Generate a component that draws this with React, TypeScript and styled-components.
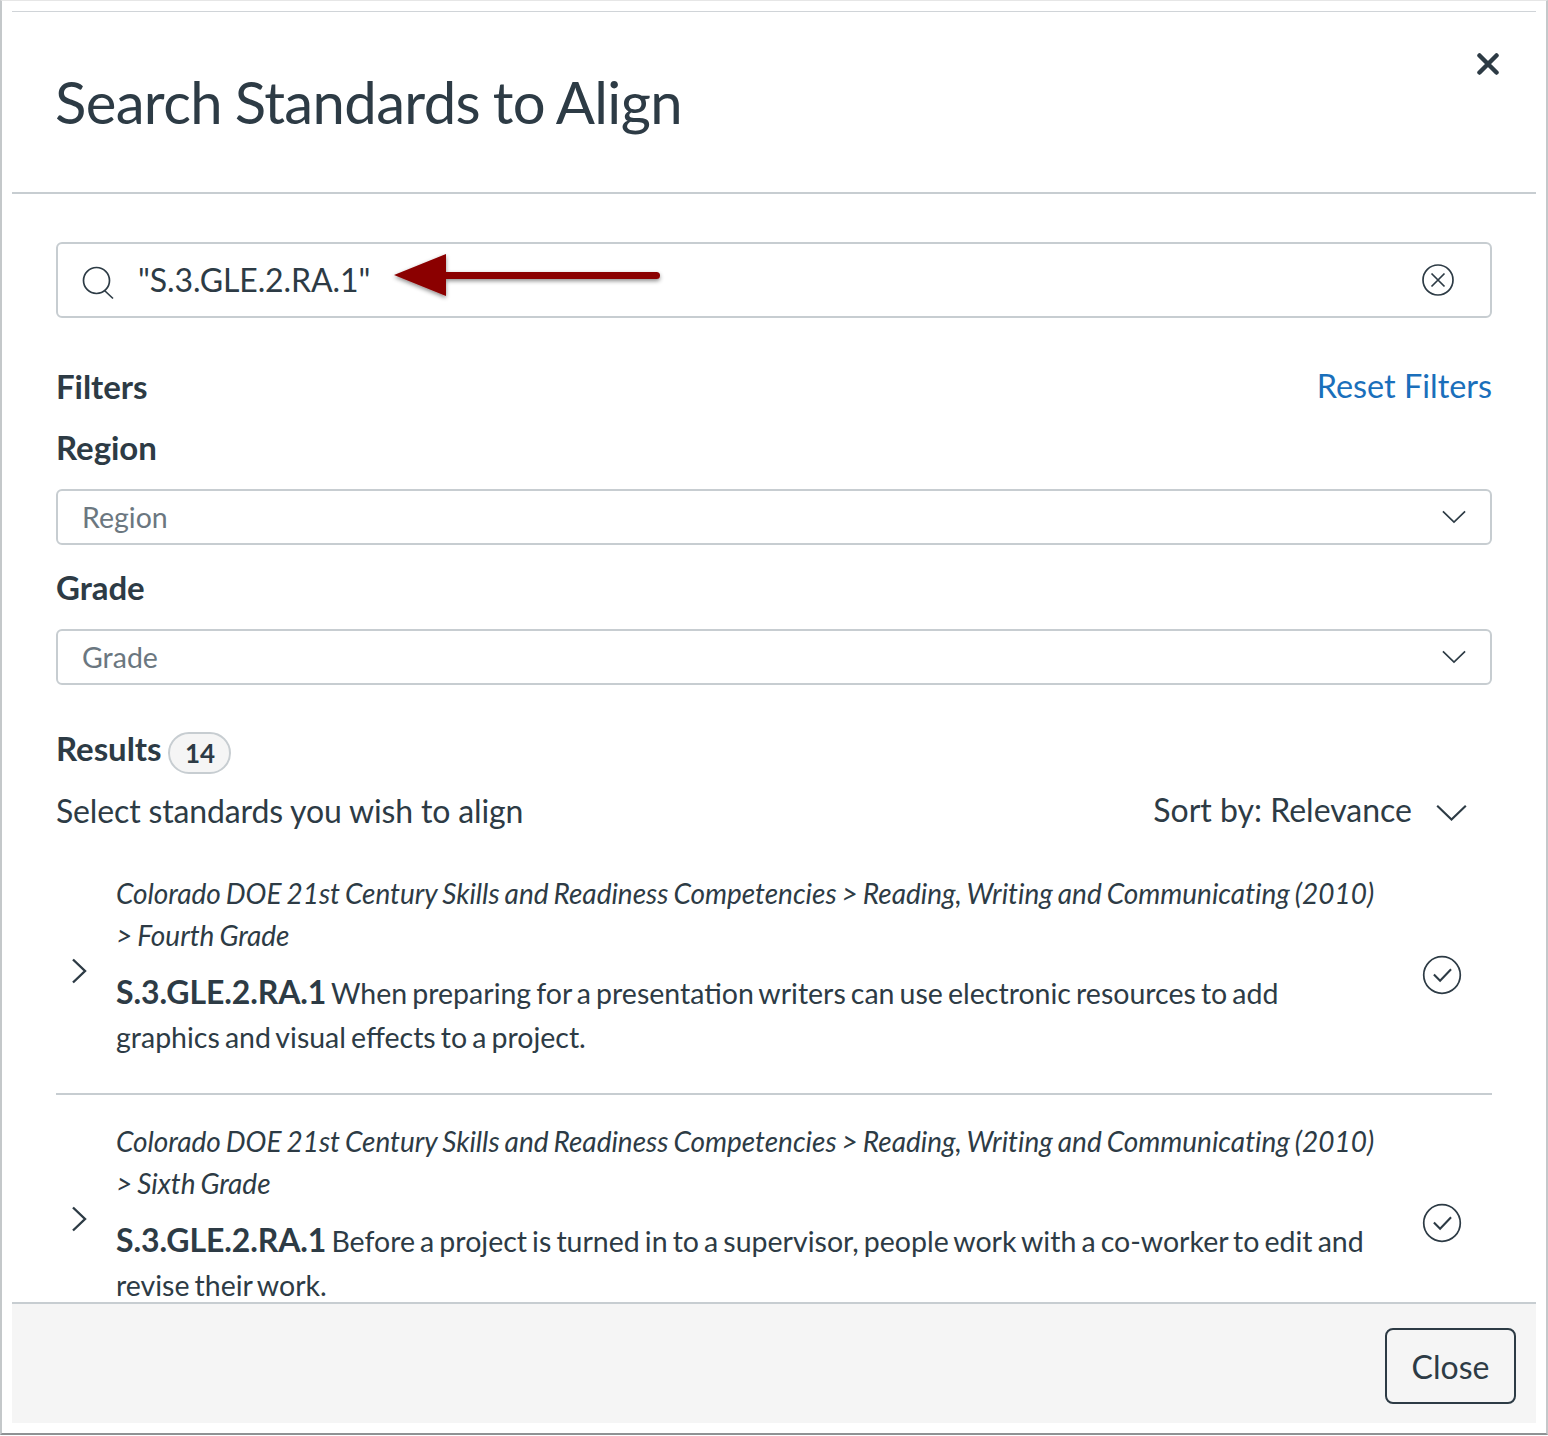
import React from "react";
import styled, { createGlobalStyle } from "styled-components";

const Global = createGlobalStyle`
  html, body { margin: 0; padding: 0; background: #fff; }
  body { font-family: Lato, "Noto Sans", sans-serif; color: #2d3b45; }
  * { box-sizing: border-box; }
`;

const Window = styled.div`
  width: 1548px;
  height: 1435px;
  border-top: 1px solid #e6e6e6;
  border-left: 2px solid #c4c8ca;
  border-bottom: 2px solid #8f9294;
  border-right: 2px solid #c4c8ca;
  padding: 10px;
  display: flex;
  flex-direction: column;
  background: #fff;
`;
const Header = styled.header`
  height: 183px;
  flex: none;
  border-top: 1px solid #d0d4d8;
  border-bottom: 2px solid #c7cdd1;
  padding: 0 37px 0 44px;
  display: flex;
  justify-content: space-between;
`;
const Title = styled.h1`
  margin: 54px 0 0 -1px;
  font-size: 58px;
  letter-spacing: -0.63px;
  word-spacing: -1.5px;
  line-height: 72px;
  font-weight: 400;
`;
const CloseIcon = styled.button`
  margin-top: 41px;
  width: 22px;
  height: 22px;
  padding: 0;
  border: 0;
  background: none;
  color: #2d3b45;
  svg { display: block; }
`;
const Body = styled.main`
  height: 1108px;
  flex: none;
  overflow: hidden;
  padding: 48px 44px 0;
`;
const SearchBox = styled.div`
  position: relative;
  height: 76px;
  border: 2px solid #c7cdd1;
  border-radius: 6px;
  display: flex;
  align-items: center;
  padding: 0 36px 0 24px;
  svg.lens { margin-top: 6px; }
`;
const SearchText = styled.span`
  margin-left: 22px;
  margin-top: -1px;
  font-size: 32px;
  letter-spacing: -0.1px;
  flex: 1;
`;
const Arrow = styled.svg`
  position: absolute;
  left: 331px;
  top: 1px;
`;
const FilterHead = styled.div`
  display: flex;
  justify-content: space-between;
  align-items: flex-start;
  margin-top: 47px;
  height: 44px;
`;
const Label = styled.div`
  font-size: 33px;
  font-weight: 700;
  letter-spacing: -0.05px;
  line-height: 42px;
  padding-bottom: 2px;
`;
const ResetLink = styled.a`
  font-size: 32.4px;
  line-height: 42px;
  color: #1a6fbb;
`;
const FieldLabel = styled(Label)<{ $gap: number }>`
  margin-top: ${(p) => p.$gap}px;
`;
const Select = styled.div`
  margin-top: 19px;
  height: 56px;
  border: 2px solid #c7cdd1;
  border-radius: 6px;
  display: flex;
  align-items: center;
  justify-content: space-between;
  padding: 0 24px;
  font-size: 28.5px;
  color: #6b7780;
`;
const ResultsHead = styled.div`
  margin-top: 42px;
  height: 44px;
  display: flex;
  align-items: center;
`;
const Badge = styled.span`
  margin-left: 7px;
  margin-top: 7px;
  width: 63px;
  height: 42px;
  border: 2px solid #c7cdd1;
  border-radius: 21px;
  background: #f5f5f5;
  font-size: 26px;
  font-weight: 700;
  display: flex;
  align-items: center;
  justify-content: center;
`;
const SortRow = styled.div`
  margin-top: 17px;
  height: 44px;
  display: flex;
  align-items: center;
  justify-content: space-between;
  padding-right: 25px;
  font-size: 32px;
`;
const Instruction = styled.span`
  letter-spacing: -0.15px;
`;
const SortBy = styled.div`
  display: flex;
  align-items: center;
  gap: 24px;
  margin-top: -1px;
  svg { margin-top: 7px; }
`;
const List = styled.div`
  margin-top: 15px;
`;
const Item = styled.article`
  height: 248px;
  flex: none;
  display: grid;
  grid-template-columns: 60px 1fr 70px;
  border-bottom: 2px solid #c7cdd1;
  padding-top: 25px;
  &:last-child { border-bottom: 0; }
`;
const Chevron = styled.div`
  padding: 86px 0 0 15px;
`;
const Content = styled.div`
  padding-right: 44px;
`;
const Trail = styled.div`
  font-size: 28px;
  font-style: italic;
  letter-spacing: -0.02px;
  word-spacing: -1.5px;
  line-height: 42px;
  white-space: nowrap;
`;
const Desc = styled.div`
  margin-top: 14px;
  font-size: 28.5px;
  word-spacing: -2.2px;
  line-height: 44px;
`;
const Code = styled.strong`
  font-size: 32px;
  letter-spacing: -0.1px;
  font-weight: 700;
`;
const Check = styled.div`
  padding: 82px 30px 0 0;
  display: flex;
  justify-content: flex-end;
  align-items: flex-start;
`;
const Footer = styled.footer`
  height: 121px;
  flex: none;
  border-top: 2px solid #c7cdd1;
  background: #f5f5f5;
  display: flex;
  justify-content: flex-end;
  padding: 24px 20px 0 0;
`;
const CloseButton = styled.button`
  width: 131px;
  height: 76px;
  border: 2px solid #2d3b45;
  border-radius: 8px;
  background: #f5f5f5;
  color: #2d3b45;
  font: 400 32px Lato, sans-serif;
`;

const Down = ({ w = 24, h = 14 }: { w?: number; h?: number }) => (
  <svg width={w} height={h} viewBox="0 0 26 15" fill="none" stroke="#2d3b45" strokeWidth="1.8" preserveAspectRatio="none"><path d="M1 1.5 13 13 25 1.5" /></svg>
);
const Tick = () => (
  <svg width="42" height="42" viewBox="0 0 42 42" fill="none" stroke="#2d3b45"><circle cx="21" cy="21" r="19.2" strokeWidth="1.8" /><path d="M12.5 20.5 19 27 30.5 15" strokeWidth="2.2" /></svg>
);
const Right = () => (
  <svg width="16" height="26" viewBox="0 0 16 26" fill="none" stroke="#2d3b45" strokeWidth="2.4"><path d="M2 1.5 14 13 2 24.5" /></svg>
);

const items = [
  { grade: "> Fourth Grade", text: "When preparing for a presentation writers can use electronic resources to add graphics and visual effects to a project." },
  { grade: "> Sixth Grade", text: "Before a project is turned in to a supervisor, people work with a co-worker to edit and revise their work." },
];

export default function App() {
  return (
    <Window>
      <Global />
      <Header>
        <Title>Search Standards to Align</Title>
        <CloseIcon aria-label="Close">
          <svg width="22" height="22" viewBox="0 0 22 22" stroke="currentColor" strokeWidth="4.5" strokeLinecap="round"><path d="M2.5 2.5 19.5 19.5M19.5 2.5 2.5 19.5" /></svg>
        </CloseIcon>
      </Header>
      <Body>
        <SearchBox>
          <svg className="lens" width="34" height="34" viewBox="0 0 34 34" fill="none" stroke="#2d3b45" strokeWidth="1.7"><circle cx="14.5" cy="14.5" r="13" /><path d="M22.5 24.5 31 32.5" /></svg>
          <SearchText>"S.3.GLE.2.RA.1"</SearchText>
          <svg width="32" height="32" viewBox="0 0 32 32" fill="none" stroke="#2d3b45" strokeWidth="1.7"><circle cx="16" cy="16" r="15" /><path d="M9.5 9.5 22.5 22.5M22.5 9.5 9.5 22.5" /></svg>
          <Arrow width="300" height="76" viewBox="0 0 300 76" fill="none">
            <defs>
              <filter id="sh" x="-10%" y="-30%" width="120%" height="170%"><feDropShadow dx="0" dy="2" stdDeviation="2" floodColor="#000" floodOpacity="0.45" /></filter>
            </defs>
            <g filter="url(#sh)" fill="#8b0000">
              <path d="M5 30 57 9V51Z" />
              <rect x="54" y="27" width="217" height="7" rx="3.5" />
            </g>
          </Arrow>
        </SearchBox>
        <FilterHead>
          <Label>Filters</Label>
          <ResetLink>Reset Filters</ResetLink>
        </FilterHead>
        <FieldLabel $gap={17}>Region</FieldLabel>
        <Select>Region<Down /></Select>
        <FieldLabel $gap={21}>Grade</FieldLabel>
        <Select>Grade<Down /></Select>
        <ResultsHead>
          <Label>Results</Label>
          <Badge>14</Badge>
        </ResultsHead>
        <SortRow>
          <Instruction>Select standards you wish to align</Instruction>
          <SortBy>Sort by: Relevance <Down w={31} h={18} /></SortBy>
        </SortRow>
        <List>
          {items.map((it) => (
            <Item key={it.grade}>
              <Chevron><Right /></Chevron>
              <Content>
                <Trail>Colorado DOE 21st Century Skills and Readiness Competencies &gt; Reading, Writing and Communicating (2010)<br />{it.grade}</Trail>
                <Desc><Code>S.3.GLE.2.RA.1</Code> {it.text}</Desc>
              </Content>
              <Check><Tick /></Check>
            </Item>
          ))}
        </List>
      </Body>
      <Footer><CloseButton>Close</CloseButton></Footer>
    </Window>
  );
}
